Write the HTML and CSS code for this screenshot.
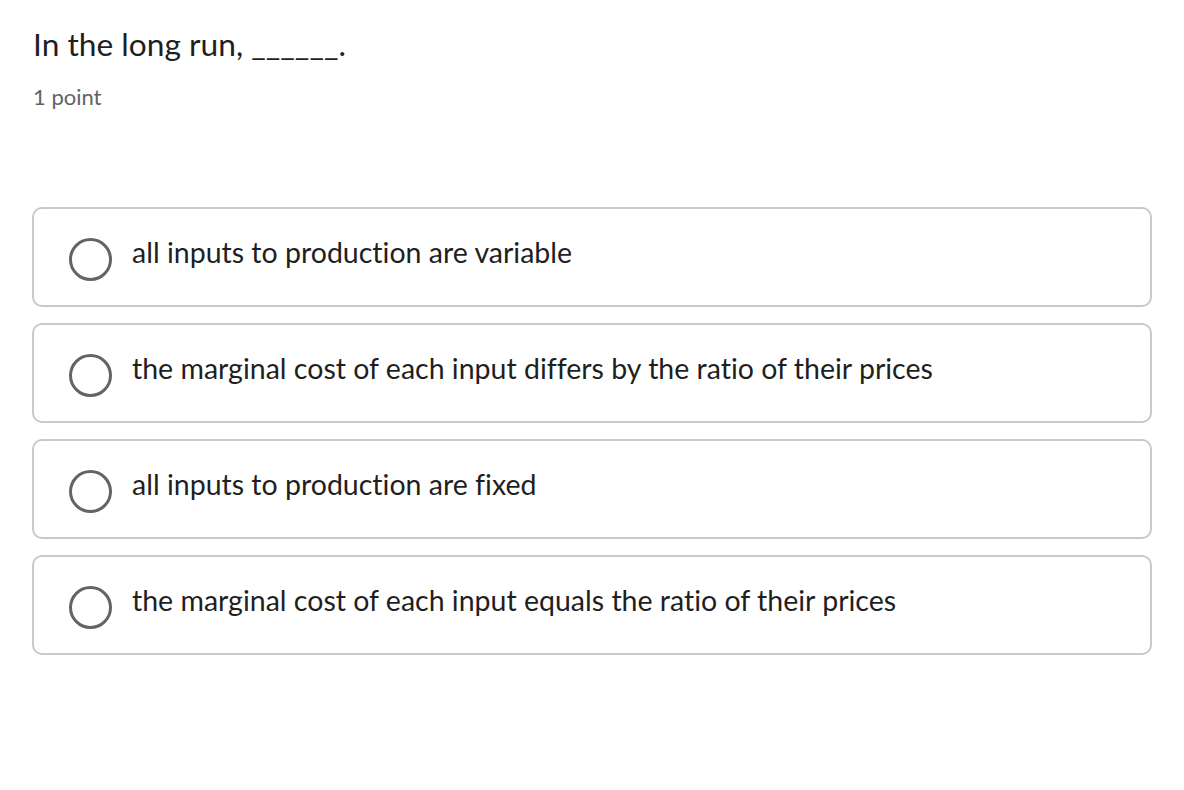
FILE: index.html
```html
<!DOCTYPE html>
<html>
<head>
<meta charset="utf-8">
<link rel="stylesheet" href="styles.css">
</head>
<body>
<div class="page">
  <div class="question">
    <h1 class="prompt">In the long run, ______.</h1>
    <div class="points">1 point</div>
  </div>
  <div class="options">
    <label class="option"><span class="radio"></span><span class="label">all inputs to production are variable</span></label>
    <label class="option"><span class="radio"></span><span class="label">the marginal cost of each input differs by the ratio of their prices</span></label>
    <label class="option"><span class="radio"></span><span class="label">all inputs to production are fixed</span></label>
    <label class="option"><span class="radio"></span><span class="label">the marginal cost of each input equals the ratio of their prices</span></label>
  </div>
</div>
</body>
</html>
```

FILE: styles.css
```css
html, body {
  margin: 0;
  padding: 0;
  background: #ffffff;
}
body {
  font-family: "Lato", "Open Sans", sans-serif;
  color: #1f1f1f;
  font-variant-ligatures: none;
}
.page {
  padding: 22px 32px 0 32px;
  width: 1120px;
}
.prompt {
  margin: 0;
  font-size: 31.7px;
  font-weight: 400;
  line-height: 44px;
  padding-left: 1px;
}
.points {
  margin-top: 18px;
  font-size: 22px;
  line-height: 26px;
  color: #636363;
  padding-left: 1px;
}
.options {
  margin-top: 97px;
  display: flex;
  flex-direction: column;
  gap: 16px;
}
.option {
  box-sizing: border-box;
  height: 100px;
  border: 2px solid #c9c9c9;
  border-radius: 10px;
  display: flex;
  align-items: flex-start;
  padding: 26px 0 0 35px;
}
.radio {
  box-sizing: border-box;
  width: 43px;
  height: 43px;
  border: 3px solid #646464;
  border-radius: 50%;
  flex: none;
  margin-top: 3px;
}
.label {
  margin-left: 20px;
  font-size: 28.5px;
  line-height: 34px;
}
```
